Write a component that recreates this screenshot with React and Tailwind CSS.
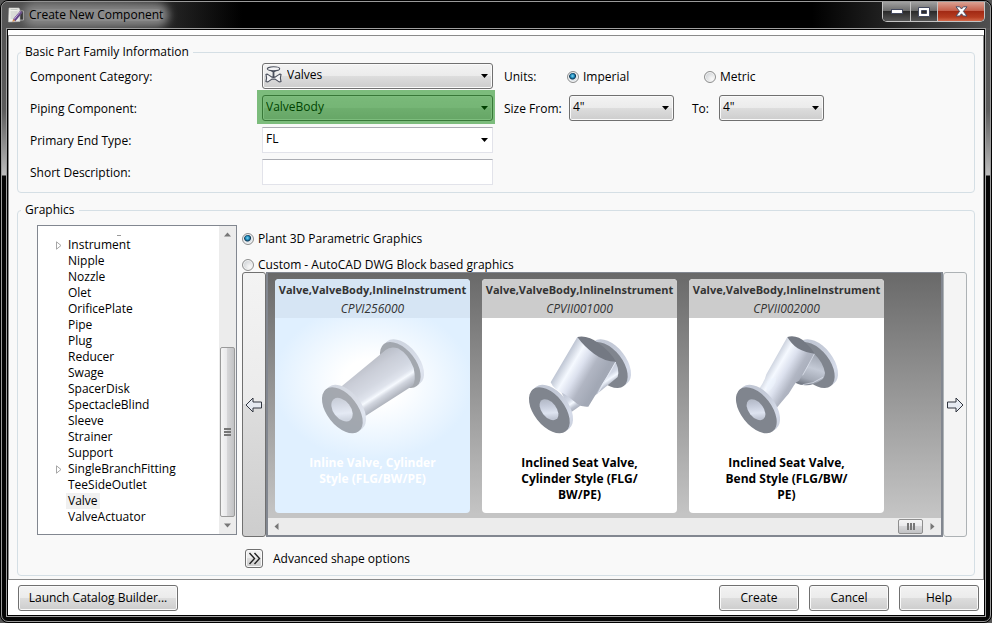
import React, { useState } from 'react';

const treeItems = [
  { name: 'Instrument', expandable: true },
  { name: 'Nipple' },
  { name: 'Nozzle' },
  { name: 'Olet' },
  { name: 'OrificePlate' },
  { name: 'Pipe' },
  { name: 'Plug' },
  { name: 'Reducer' },
  { name: 'Swage' },
  { name: 'SpacerDisk' },
  { name: 'SpectacleBlind' },
  { name: 'Sleeve' },
  { name: 'Strainer' },
  { name: 'Support' },
  { name: 'SingleBranchFitting', expandable: true },
  { name: 'TeeSideOutlet' },
  { name: 'Valve' },
  { name: 'ValveActuator' },
];

const shapes = [
  { code: 'CPVI256000', label: 'Inline Valve, Cylinder Style (FLG/BW/PE)', kind: 'inline' },
  { code: 'CPVII001000', label: 'Inclined Seat Valve, Cylinder Style (FLG/ BW/PE)', kind: 'cylinder' },
  { code: 'CPVII002000', label: 'Inclined Seat Valve, Bend Style (FLG/BW/ PE)', kind: 'bend' },
];

const face =
  'bg-[linear-gradient(to_bottom,#f3f3f3_0%,#ebebeb_50%,#dddddd_50%,#cdcdcd_100%)] border border-[#707070] rounded-[3px] shadow-[inset_0_0_0_1px_#fafafa]';

function PushButton({ children, className = '' }) {
  return <button className={`h-[26px] text-center ${face} ${className}`}>{children}</button>;
}

function Combo({ id, label, value, options, flat, icon, marked, className = '' }) {
  return (
    <div className={`relative ${className}`}>
      <select
        id={id}
        aria-label={label}
        defaultValue={value}
        className={`block w-full h-[26px] pb-[3px] appearance-none outline-none ${icon ? 'pl-6' : 'pl-[3px]'} ${
          flat ? 'bg-white border border-[#e2e3ea] border-t-[#abadb3]' : face
        }`}
      >
        {options.map((o) => (
          <option key={o}>{o}</option>
        ))}
      </select>
      {icon && <div className="absolute left-[3px] top-[3px] pointer-events-none">{icon}</div>}
      <svg className="absolute right-[5px] top-[11px] pointer-events-none" width="7" height="4" viewBox="0 0 7 4">
        <path d="M0 0h7L3.5 4z" fill="#000" />
      </svg>
      {marked && <div className="absolute -left-[5px] -right-0.5 -top-[5px] -bottom-[3px] bg-[#008000]/50 pointer-events-none" />}
    </div>
  );
}

function Radio({ name, label, checked, onChange, className = '' }) {
  return (
    <label className={`flex items-center gap-1 h-3.5 whitespace-nowrap ${className}`}>
      <input
        type="radio"
        name={name}
        checked={checked}
        onChange={onChange}
        className="appearance-none w-3 h-3 shrink-0 rounded-full border border-[#8e8f8f] bg-[radial-gradient(circle_at_70%_70%,#f6f6f6_10%,#c8ccd0_90%)] shadow-[inset_0_0_0_1px_#f4f4f4] checked:bg-[radial-gradient(circle_at_45%_40%,#7fd8f5_0px,#1b84b5_2px,#0c3552_3px,#dfe5ea_4px)]"
      />
      <span>{label}</span>
    </label>
  );
}

function ValveGlyph() {
  return (
    <svg width="17" height="17" viewBox="0 0 17 17" fill="#f4f4f6" stroke="#4a4f5c" strokeWidth="1.1">
      <ellipse cx="8.5" cy="2.8" rx="6.2" ry="2" />
      <path d="M1 8.500q1 -.8 2.500 .4l3.500 2.200h3l3.500 -2.200q1.500 -1.200 2.500 -.4q-1.200 3.500 0 7q-1.500 .8 -3 -.4l-3 -2h-3l-3 2q-1.500 1.200 -3 .4q1.200 -3.500 0 -7z" />
      <path d="M8.500 5v7" strokeWidth="1.800" />
      <path d="M6.500 5.500h4" />
    </svg>
  );
}

function NoteIcon() {
  return (
    <svg width="16" height="16" viewBox="0 0 16 16">
      <path d="M10 4h5.500v9h-5.500z" fill="#1a1a1a" stroke="#e4e4e4" strokeWidth=".7" />
      <path d="M1 1h10l1 2v11.500l-11.500 .5z" fill="#f1f1ec" stroke="#c4c4c4" strokeWidth=".6" />
      <path d="M2.500 2.500h7M2.500 5h7M2.500 7h7M2.500 9h5M2.500 11h4" stroke="#b9bcb9" strokeWidth=".8" />
      <path d="M6 13.500l7.500 -9" stroke="#5d3d87" strokeWidth="3" />
      <path d="M6 12.500l6.500 -8" stroke="#cba9df" strokeWidth="1" />
      <path d="M4.300 15l.8 -3l2.200 1.700z" fill="#d28a4d" />
    </svg>
  );
}

// One flange: a rim swept back from a tilted disc
function Flange({ cx, cy, id, dx = 10, dy = -8 }) {
  return (
    <g>
      <g fill={`url(#rim-${id})`}>
        <ellipse cx={cx + dx} cy={cy + dy} rx="80" ry="46" transform={`rotate(52 ${cx + dx} ${cy + dy})`} />
        <ellipse cx={cx + dx / 2} cy={cy + dy / 2} rx="80" ry="46" transform={`rotate(52 ${cx + dx / 2} ${cy + dy / 2})`} />
      </g>
      <ellipse cx={cx} cy={cy} rx="80" ry="46" transform={`rotate(52 ${cx} ${cy})`} fill="#80858e" />
    </g>
  );
}

function ValveDrawing({ kind }) {
  return (
    <svg viewBox="0 0 585 400" className={`block w-full ${kind === 'inline' ? 'opacity-70' : ''}`} aria-hidden="true">
      <defs>
        <linearGradient id={`rim-${kind}`} x1="0" y1="0" x2="1" y2="1">
          <stop offset="0" stopColor="#b7bdca" />
          <stop offset=".45" stopColor="#d6dcea" />
          <stop offset=".75" stopColor="#c8cedb" />
          <stop offset="1" stopColor="#858b98" />
        </linearGradient>
        <linearGradient id={`pipe-${kind}`} gradientUnits="userSpaceOnUse" x1="268" y1="142" x2="338" y2="250">
          <stop offset="0" stopColor="#a3a8b5" />
          <stop offset=".2" stopColor="#b4b9c7" />
          <stop offset=".5" stopColor="#c3c9d7" />
          <stop offset=".66" stopColor="#d3d9e6" />
          <stop offset=".75" stopColor="#f3f8ff" />
          <stop offset=".84" stopColor="#bfc5d2" />
          <stop offset="1" stopColor="#9096a3" />
        </linearGradient>
        <linearGradient id={`seat-${kind}`} gradientUnits="userSpaceOnUse" x1="245" y1="125" x2="352" y2="188">
          <stop offset="0" stopColor="#bdc4d2" />
          <stop offset=".25" stopColor="#f5f9ff" />
          <stop offset=".45" stopColor="#dce1ee" />
          <stop offset=".7" stopColor="#b1b6c3" />
          <stop offset="1" stopColor="#a2a8b5" />
        </linearGradient>
        <linearGradient id={`bore-${kind}`} x1="0" y1="0" x2="1" y2=".4">
          <stop offset="0" stopColor="#a9afbb" />
          <stop offset=".4" stopColor="#c3c9d8" />
          <stop offset=".75" stopColor="#dde3f0" />
          <stop offset="1" stopColor="#c0c6d4" />
        </linearGradient>
        <linearGradient id={`elbow-${kind}`} x1=".7" y1="0" x2=".4" y2="1">
          <stop offset="0" stopColor="#9ea4b0" />
          <stop offset=".45" stopColor="#c4cad6" />
          <stop offset=".8" stopColor="#a4aab6" />
          <stop offset="1" stopColor="#757b86" />
        </linearGradient>
      </defs>

      <Flange id={kind} cx={376} cy={141} />

      {kind === 'inline' && (
        <path d="M200 205L332 96Q346 84 369 91Q400 108 416 150Q424 188 413 203L262 300z" fill="url(#pipe-inline)" />
      )}

      {kind === 'cylinder' && (
        <g>
          <path d="M235 215L396 126Q414 150 407 177L345 228L265 284z" fill="url(#pipe-cylinder)" />
          <path d="M286 57L206 193Q215 215 247 228Q272 246 285 257Q300 268 319 266L401 131z" fill="url(#seat-cylinder)" />
          <path d="M286 57Q318 51 350 76Q384 100 402 131Q368 131 336 107Q306 85 286 57z" fill="#747983" />
          <path d="M401 132L348 226" stroke="#e5eaf4" strokeWidth="3" />
        </g>
      )}

      {kind === 'bend' && (
        <g>
          <path d="M376 108Q402 132 408 165Q406 182 396 187Q368 206 342 201Q325 200 318 192L340 165z" fill="url(#elbow-bend)" />
          <path
            d="M295 57L232 169Q229 185 212 210Q235 245 258 276Q282 246 299 227L314 203Q320 191 330 188L377 107z"
            fill="url(#seat-bend)"
          />
          <path d="M295 57Q324 49 350 74Q368 90 377 107Q352 106 326 91Q307 78 295 57z" fill="#747983" />
          <path d="M376 108L341 172M341 200L372 194L402 178" stroke="#e5eaf4" strokeWidth="2" fill="none" />
          <path d="M240 184Q225 200 238 220Q260 205 262 178z" fill="#edf3fd" opacity=".6" />
        </g>
      )}

      <Flange id={kind} cx={202} cy={277} />
      <ellipse
        cx="201"
        cy="275"
        rx={kind === 'inline' ? 40 : 36}
        ry={kind === 'inline' ? 26 : 22}
        transform="rotate(52 201 275)"
        fill={`url(#bore-${kind})`}
      />
    </svg>
  );
}

function ShapeCard({ shape, selected, onSelect }) {
  return (
    <button
      onClick={onSelect}
      className={`w-[195px] h-[234px] shrink-0 flex flex-col rounded overflow-hidden ${
        selected ? 'bg-[radial-gradient(100px_78px_at_50%_44%,#ffffff_30%,#e0f0ff_100%)]' : 'bg-white'
      }`}
    >
      <span className={`w-full h-[39px] shrink-0 text-[#333] ${selected ? 'bg-[#d6e5f4]' : 'bg-[#cccccc]'}`}>
        <span className="flex justify-center h-[22px] leading-[22px] text-[11px] font-bold whitespace-nowrap">
          Valve,ValveBody,InlineInstrument
        </span>
        <span className="block leading-4 italic">{shape.code}</span>
      </span>
      <span className="block w-full">
        <ValveDrawing kind={shape.kind} />
      </span>
      <span
        className={`block w-[135px] mx-auto mt-1 leading-4 font-bold ${selected ? 'text-white' : 'text-black'}`}
      >
        {shape.label}
      </span>
    </button>
  );
}

function ArrowIcon({ left }) {
  return (
    <svg width="18" height="16" viewBox="0 0 18 16" className={left ? '' : 'rotate-180'}>
      <path d="M1 8L8 1v4h8.500v6H8v4z" fill="#e6eaf1" stroke="#30353f" strokeWidth="1" />
    </svg>
  );
}

function WindowControls() {
  const base = 'h-[19px] flex items-center justify-center border-r border-[#c4c4c4]';
  const dark = 'bg-[linear-gradient(to_bottom,#a0a0a0_0%,#6a6a6a_48%,#2b2b2b_50%,#555555_100%)]';
  return (
    <div className="flex border border-t-0 border-[#c4c4c4] rounded-b-[5px] overflow-hidden">
      <button aria-label="Minimize" className={`${base} ${dark} w-7`}>
        <svg width="12" height="5" viewBox="0 0 12 5">
          <rect x=".5" y=".5" width="11" height="4" fill="#fff" stroke="#444a60" />
        </svg>
      </button>
      <button aria-label="Maximize" className={`${base} ${dark} w-[27px]`}>
        <svg width="12" height="10" viewBox="0 0 12 10">
          <path d="M.5 .5h11v9h-11zM3.500 3.500v3h5v-3z" fill="#fff" fillRule="evenodd" stroke="#444a60" />
        </svg>
      </button>
      <button
        aria-label="Close"
        className="h-[19px] w-[46px] flex items-center justify-center bg-[linear-gradient(to_bottom,#dba193_0%,#c45c47_48%,#a32a14_50%,#b53c20_80%,#d2694a_100%)]"
      >
        <svg width="13" height="11" viewBox="0 0 13 11">
          <path
            d="M1 .8h3.600l1.900 2.200l1.900 -2.200h3.600l-3.600 4.600l3.600 4.600h-3.600l-1.900 -2.200l-1.900 2.200h-3.600l3.600 -4.600z"
            fill="#fff"
            stroke="#4a4e66"
          />
        </svg>
      </button>
    </div>
  );
}

export default function App() {
  const [units, setUnits] = useState('Imperial');
  const [source, setSource] = useState('parametric');
  const [category, setCategory] = useState('Valve');
  const [shape, setShape] = useState('CPVI256000');

  return (
    <div className="min-h-screen flex flex-col bg-[#555] text-black text-[12px] leading-4 font-['Open_Sans','Noto_Sans',sans-serif]">
      <div className="flex-1 flex flex-col rounded-lg border border-black bg-[linear-gradient(to_bottom,#505050_0px,#5c5c5c_110px,#bcbcbc_174px,#050505_175px)]">
        <div className="flex-1 flex flex-col rounded-[7px] border border-[#9a9a9a] px-1 pb-1">
          {/* Title bar */}
          <header className="-mx-1 h-[26px] shrink-0 flex items-start justify-between rounded-t-[6px] bg-[linear-gradient(to_right,#555555_0px,#3c3c3c_120px,#000000_240px,#000000_82%,#505050_100%)]">
            <div className="flex items-center gap-[5px] h-[26px] pl-1.5">
              <NoteIcon />
              <h1 className="h-3 leading-3 rounded-full whitespace-nowrap bg-[#8a8a8a] shadow-[0_0_8px_6px_#858585]">
                Create New Component
              </h1>
            </div>
            <div className="pr-[5px]">
              <WindowControls />
            </div>
          </header>

          <div className="flex-1 flex flex-col border border-[#a0a0a0]">
            <div className="flex-1 flex flex-col border border-black bg-white pt-[5px]">
              <main className="flex-1 border border-[#8a8a8a] bg-[#f9f9f9] px-2 pt-2 pb-[3px]">
                <fieldset className="border border-[#d5dfe5] rounded-[4px] pl-3 pb-[7px] pt-[3px]">
                  <legend className="-ml-[9px] px-1">Basic Part Family Information</legend>
                  <div className="grid grid-cols-[232px_231px_1fr] gap-y-1.5 items-center">
                    <label htmlFor="category" className="pt-0.5">Component Category:</label>
                    <Combo id="category" value="Valves" options={['Valves', 'Fittings', 'Pipe']} icon={<ValveGlyph />} />
                    <div className="flex items-center pl-[11px] pt-0.5">
                      <span className="w-[63px]">Units:</span>
                      <Radio
                        name="units"
                        label="Imperial"
                        className="w-[137px]"
                        checked={units === 'Imperial'}
                        onChange={() => setUnits('Imperial')}
                      />
                      <Radio name="units" label="Metric" checked={units === 'Metric'} onChange={() => setUnits('Metric')} />
                    </div>

                    <label htmlFor="piping" className="pt-0.5">Piping Component:</label>
                    <Combo id="piping" value="ValveBody" options={['ValveBody', 'ValveActuator']} marked />
                    <div className="flex items-center pl-[11px]">
                      <label htmlFor="from" className="w-[65px] pt-0.5 whitespace-nowrap">
                        Size From:
                      </label>
                      <Combo id="from" value={'4"'} options={['2"', '3"', '4"', '6"']} className="w-[105px]" />
                      <label htmlFor="to" className="w-[45px] pl-[18px] pt-0.5">
                        To:
                      </label>
                      <Combo id="to" value={'4"'} options={['2"', '3"', '4"', '6"']} className="w-[105px]" />
                    </div>

                    <label htmlFor="endtype" className="pt-0.5">Primary End Type:</label>
                    <Combo id="endtype" value="FL" options={['FL', 'BW', 'PE']} flat />
                    <span />

                    <label htmlFor="description" className="pt-0.5">Short Description:</label>
                    <input
                      id="description"
                      type="text"
                      className="w-full h-[26px] px-1 bg-white border border-[#e2e3ea] border-t-[#abadb3] outline-none"
                    />
                  </div>
                </fieldset>

                <fieldset className="mt-[9px] border border-[#d5dfe5] rounded-[4px] pl-[19px] pr-[7px] pt-[7px] pb-[7px] min-w-0">
                  <legend className="-ml-4 px-1">Graphics</legend>
                  <div className="flex items-start gap-[5px]">
                    {/* Component tree */}
                    <div className="w-[200px] h-[310px] shrink-0 flex bg-white border border-[#828790]">
                      <div className="flex-1 flex flex-col">
                        {/* tail of the row scrolled out above */}
                        <div className="h-[11px] shrink-0 pl-[79px] pt-[9px]">
                          <div className="w-1 h-px bg-[#999]" />
                        </div>
                        <ul>
                          {treeItems.map((item) => (
                            <li key={item.name} className="flex items-center h-4">
                              <span className="w-7 pl-[18px]">
                                {item.expandable && (
                                  <svg width="6" height="9" viewBox="0 0 6 9">
                                    <path d="M.5 .8v7.400L5 4.500z" fill="#fff" stroke="#a6a6a6" />
                                  </svg>
                                )}
                              </span>
                              <button
                                onClick={() => setCategory(item.name)}
                                className={`px-0.5 ${category === item.name ? 'bg-[#f0f0f0]' : ''}`}
                              >
                                {item.name}
                              </button>
                            </li>
                          ))}
                        </ul>
                      </div>
                      <div className="w-[17px] flex flex-col items-center justify-between bg-[#ececec]">
                        <button aria-label="Scroll up" className="h-[17px]">
                          <svg width="7" height="5" viewBox="0 0 7 5">
                            <path d="M0 4.500h7L3.500 .5z" fill="#777" />
                          </svg>
                        </button>
                        <div className="flex-1" />
                        <div className="w-[15px] h-[170px] flex flex-col items-center justify-center gap-px border border-[#9a9a9a] rounded-[2px] bg-[linear-gradient(to_right,#f5f5f5_0%,#e9e9eb_45%,#d6d6d8_50%,#c2c3c5_100%)]">
                          <span className="w-[7px] h-0.5 bg-[#777]" />
                          <span className="w-[7px] h-0.5 bg-[#777]" />
                          <span className="w-[7px] h-0.5 bg-[#777]" />
                        </div>
                        <button aria-label="Scroll down" className="h-[17px]">
                          <svg width="7" height="5" viewBox="0 0 7 5">
                            <path d="M0 .5h7L3.500 4.500z" fill="#777" />
                          </svg>
                        </button>
                      </div>
                    </div>

                    <div className="flex-1 min-w-0 pt-[7px]">
                      <Radio
                        name="source"
                        label="Plant 3D Parametric Graphics"
                        checked={source === 'parametric'}
                        onChange={() => setSource('parametric')}
                      />
                      <Radio
                        name="source"
                        label="Custom - AutoCAD DWG Block based graphics"
                        className="mt-3"
                        checked={source === 'custom'}
                        onChange={() => setSource('custom')}
                      />

                      {/* Shape carousel */}
                      <div className="flex h-[265px]">
                        <button
                          aria-label="Previous shapes"
                          className="w-6 shrink-0 flex items-center justify-center border border-[#707070] rounded-[3px] bg-[linear-gradient(to_bottom,#f3f3f3_0%,#ebebeb_50%,#dddddd_50%,#cdcdcd_100%)]"
                        >
                          <ArrowIcon left />
                        </button>
                        <div className="flex-1 min-w-0 flex flex-col border-2 border-t border-[#828790] bg-[linear-gradient(to_bottom,#696969,#c4c4c4_92%)]">
                          <div className="flex-1 flex gap-3 pl-[7px] pt-1.5 overflow-hidden">
                            {shapes.map((s) => (
                              <ShapeCard
                                key={s.code}
                                shape={s}
                                selected={shape === s.code}
                                onSelect={() => setShape(s.code)}
                              />
                            ))}
                          </div>
                          <div className="h-[17px] flex items-center bg-[#ececec] px-1.5">
                            <button aria-label="Scroll left">
                              <svg width="5" height="7" viewBox="0 0 5 7">
                                <path d="M4.500 0v7L.5 3.500z" fill="#777" />
                              </svg>
                            </button>
                            <div className="flex-1" />
                            <div className="w-[25px] h-[15px] mr-[7px] flex items-center justify-center gap-px border border-[#8e8e8e] rounded-[2px] bg-[linear-gradient(to_bottom,#f5f5f5_0%,#e9e9eb_45%,#d6d6d8_50%,#c2c3c5_100%)]">
                              <span className="w-0.5 h-[7px] bg-[#777]" />
                              <span className="w-0.5 h-[7px] bg-[#777]" />
                              <span className="w-0.5 h-[7px] bg-[#777]" />
                            </div>
                            <button aria-label="Scroll right">
                              <svg width="5" height="7" viewBox="0 0 5 7">
                                <path d="M.5 0v7L4.500 3.500z" fill="#777" />
                              </svg>
                            </button>
                          </div>
                        </div>
                        <button
                          aria-label="Next shapes"
                          className="w-6 shrink-0 flex items-center justify-center border border-[#adb2b5] rounded-[3px] bg-[#f4f4f4]"
                        >
                          <ArrowIcon />
                        </button>
                      </div>

                      <div className="flex items-center mt-3 pl-[3px] gap-2.5">
                        <button
                          id="advanced"
                          aria-label="Advanced shape options"
                          className={`w-[18px] h-[19px] flex items-center justify-center ${face}`}
                        >
                          <svg width="13" height="13" viewBox="0 0 13 13" fill="none" stroke="#222" strokeWidth="1.400">
                            <path d="M1.500 1l5 5.500l-5 5.500M6.500 1l5 5.500l-5 5.500" />
                          </svg>
                        </button>
                        <label htmlFor="advanced">Advanced shape options</label>
                      </div>
                    </div>
                  </div>
                </fieldset>
              </main>

              <footer className="flex items-center justify-between pt-[5px] pb-1 pl-2.5 pr-[5px]">
                <PushButton className="w-[160px]">Launch Catalog Builder...</PushButton>
                <div className="flex gap-2.5">
                  <PushButton className="w-20">Create</PushButton>
                  <PushButton className="w-20">Cancel</PushButton>
                  <PushButton className="w-20">Help</PushButton>
                </div>
              </footer>
            </div>
          </div>
        </div>
      </div>
    </div>
  );
}
